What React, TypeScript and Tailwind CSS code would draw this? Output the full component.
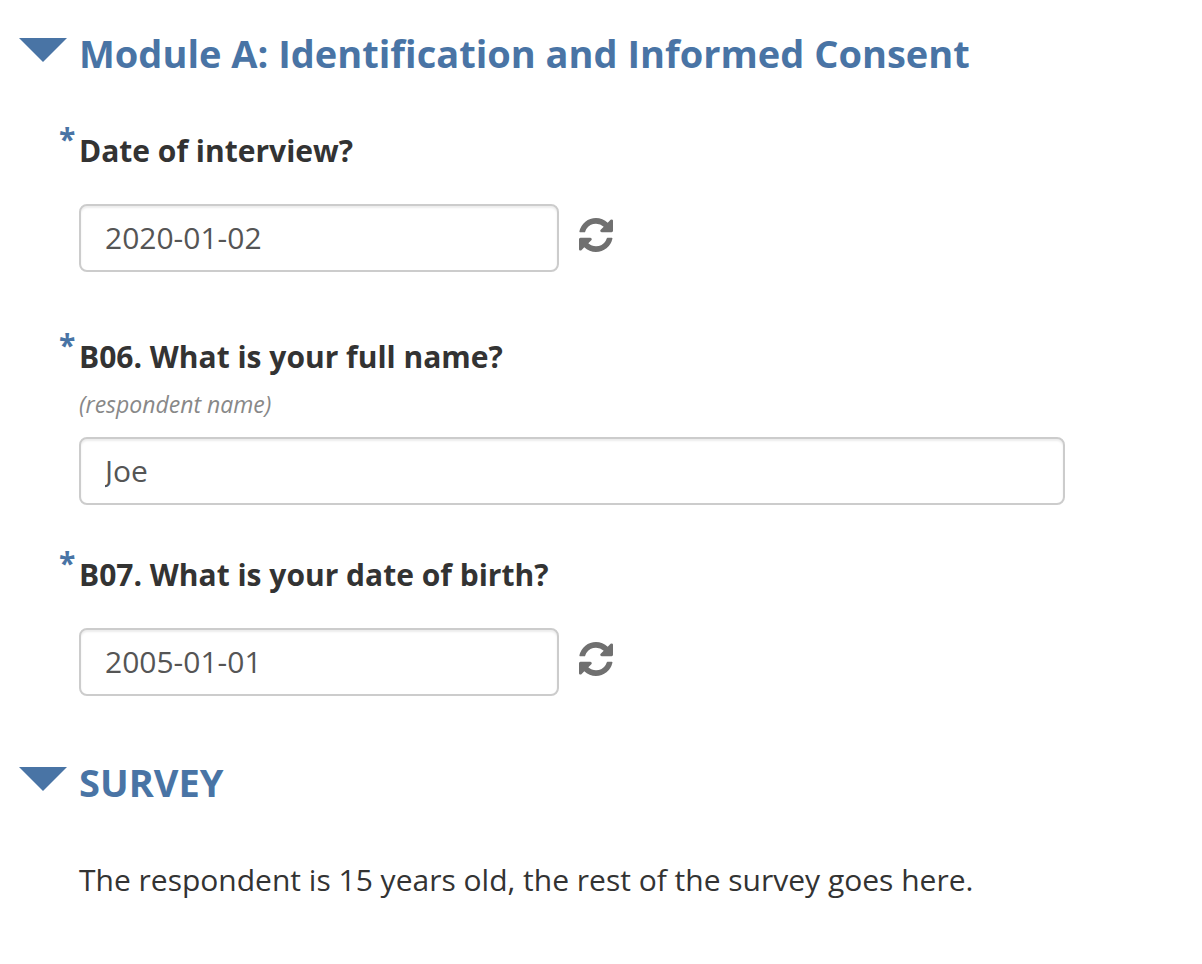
import { useState } from "react";
import type { ReactNode } from "react";

interface SectionProps {
  title: string;
  children: ReactNode;
}

function Section({ title, children }: SectionProps) {
  const [open, setOpen] = useState(true);

  return (
    <section>
      <h2 className="text-[38px] leading-[52px] font-bold text-[#4974a5]">
        <button
          type="button"
          aria-expanded={open}
          onClick={() => setOpen(!open)}
          className="flex w-full items-start gap-3 text-left cursor-pointer"
        >
          <svg viewBox="0 0 48 24" className="mt-[11px] h-6 w-12 shrink-0" fill="currentColor" aria-hidden="true">
            <path d="M0 0h48L24 24z" />
          </svg>
          <span>{title}</span>
        </button>
      </h2>
      {open && <div className="pl-[60px] pr-[118px] pt-[51px]">{children}</div>}
    </section>
  );
}

interface LabelProps {
  htmlFor: string;
  text: string;
}

function QuestionLabel({ htmlFor, text }: LabelProps) {
  return (
    <label htmlFor={htmlFor} className="relative block text-[30px] leading-[41px] font-bold text-[#333333]">
      <span className="absolute -left-5 -top-3 text-[#4974a5]">*</span>
      {text}
    </label>
  );
}

const inputClass =
  "block h-[68px] rounded-lg border-2 border-[#cccccc] bg-white px-6 pb-0.5 text-[30px] text-[#555555] shadow-[inset_0_2px_2px_rgba(0,0,0,0.075)] outline-none focus:border-[#4974a5]";

interface DateFieldProps {
  id: string;
  label: string;
  initial: string;
}

function DateField({ id, label, initial }: DateFieldProps) {
  const [value, setValue] = useState(initial);

  return (
    <div>
      <QuestionLabel htmlFor={id} text={label} />
      <div className="mt-[33px] flex items-start gap-5">
        <input
          id={id}
          type="text"
          value={value}
          onChange={(e) => setValue(e.target.value)}
          className={`${inputClass} w-[480px]`}
        />
        <button
          type="button"
          aria-label="Reset"
          onClick={() => setValue("")}
          className="mt-[14px] text-[#707070] cursor-pointer"
        >
          <svg viewBox="128 128 1536 1536" className="size-[34px]" fill="currentColor" aria-hidden="true">
            <path d="M1639 1056q0 5-1 7-64 268-268 434.5t-478 166.5q-146 0-282.5-55t-243.5-157l-129 129q-19 19-45 19t-45-19-19-45v-448q0-26 19-45t45-19h448q26 0 45 19t19 45-19 45l-137 137q71 66 161 102t187 36q134 0 250-65t186-179q11-17 53-117 8-23 30-23h192q13 0 22.5 9.5t9.5 22.5zm25-800v448q0 26-19 45t-45 19h-448q-26 0-45-19t-19-45 19-45l138-138q-148-137-349-137-134 0-250 65t-186 179q-11 17-53 117-8 23-30 23h-199q-13 0-22.5-9.5t-9.5-22.5v-7q65-268 270-434.5t480-166.5q146 0 284 55.5t245 156.5l130-129q19-19 45-19t45 19 19 45z" />
          </svg>
        </button>
      </div>
    </div>
  );
}

function App() {
  const [name, setName] = useState("Joe");

  return (
    <form className="min-h-screen bg-white px-[19px] pt-[27px] pb-16 font-['Open_Sans','Noto_Sans',sans-serif]">
      <Section title="Module A: Identification and Informed Consent">
        <DateField id="interview-date" label="Date of interview?" initial="2020-01-02" />

        <div className="mt-16 mb-[49px]">
          <QuestionLabel htmlFor="full-name" text="B06. What is your full name?" />
          <p id="full-name-hint" className="mt-3 mb-[18px] text-[23px] leading-[30px] italic text-[#888888]">
            (respondent name)
          </p>
          <input
            id="full-name"
            type="text"
            aria-describedby="full-name-hint"
            value={name}
            onChange={(e) => setName(e.target.value)}
            className={`${inputClass} w-full`}
          />
        </div>

        <DateField id="birth-date" label="B07. What is your date of birth?" initial="2005-01-01" />
      </Section>

      <div className="mt-[60px]">
        <Section title="SURVEY">
          <p className="text-[30px] leading-[41px] text-[#333333]">
            The respondent is 15 years old, the rest of the survey goes here.
          </p>
        </Section>
      </div>
    </form>
  );
}

export default App;
